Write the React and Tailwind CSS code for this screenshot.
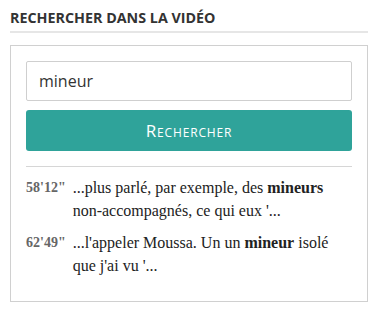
import React from "react";

const RESULTS = [
  { t: "58'12\"", before: "...plus parlé, par exemple, des ", hit: "mineurs", after: " non-accompagnés, ce qui eux '..." },
  { t: "62'49\"", before: "...l'appeler Moussa. Un un ", hit: "mineur", after: " isolé que j'ai vu '..." },
];

export default function App() {
  return (
    <div className="w-[378px] h-[309px] bg-white px-[10px] pt-[8px]">
      <h3 className="font-['Open_Sans',sans-serif] font-bold text-[14.3px] leading-[20px] text-[#333] uppercase pb-[3px] border-b-2 border-[#e6e6e6]">
        Rechercher dans la vidéo
      </h3>
      <div className="mt-[12px] h-[257px] border border-[#d0d0d0] px-[15px] pt-[15px]">
        <input
          defaultValue="mineur"
          className="block w-full h-[40px] border border-[#cfcfcf] rounded-[2px] px-[12px] font-['Open_Sans',sans-serif] text-[16px] text-[#333] outline-none"
        />
        <button className="mt-[9px] w-full h-[41px] rounded-[3px] bg-[#2fa39a] text-white font-['Open_Sans',sans-serif] text-[17px] tracking-[0.05em] [font-variant:small-caps]">
          Rechercher
        </button>
        <div className="mt-[15px] border-t border-[#d6d6d6] pt-[9px] space-y-[9px]">
          {RESULTS.map((r) => (
            <div key={r.t} className="flex gap-[7px]">
              <div className="shrink-0 font-['Liberation_Serif',serif] font-bold text-[14px] leading-[23px] text-[#666]">{r.t}</div>
              <p className="pr-[10px] font-['Liberation_Serif',serif] text-[16px] leading-[23px] text-[#222]">
                {r.before}<span className="font-bold">{r.hit}</span>{r.after}
              </p>
            </div>
          ))}
        </div>
      </div>
    </div>
  );
}
